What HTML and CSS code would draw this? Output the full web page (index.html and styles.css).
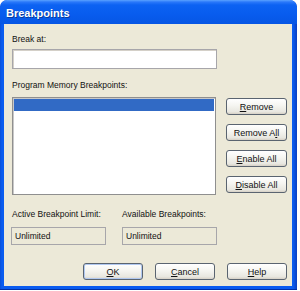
FILE: index.html
```html
<!DOCTYPE html>
<html>
<head>
<meta charset="utf-8">
<link rel="stylesheet" href="styles.css">
</head>
<body>
<div class="window">
  <div class="titlebar">Breakpoints</div>
  <div class="client">
    <div class="label">Break at:</div>
    <div class="input"></div>
    <div class="label label-prog">Program Memory Breakpoints:</div>
    <div class="list-row">
      <div class="listbox"><div class="selected"></div></div>
      <div class="side-buttons">
        <div class="btn"><u>R</u>emove</div>
        <div class="btn">Remove A<u>l</u>l</div>
        <div class="btn"><u>E</u>nable All</div>
        <div class="btn"><u>D</u>isable All</div>
      </div>
    </div>
    <div class="info-row">
      <div class="info">
        <div class="label">Active Breakpoint Limit:</div>
        <div class="ro">Unlimited</div>
      </div>
      <div class="info info2">
        <div class="label">Available Breakpoints:</div>
        <div class="ro">Unlimited</div>
      </div>
    </div>
    <div class="bottom-buttons">
      <div class="btn btn-default"><u>O</u>K</div>
      <div class="btn"><u>C</u>ancel</div>
      <div class="btn"><u>H</u>elp</div>
    </div>
  </div>
</div>
</body>
</html>
```
FILE: styles.css
```css
html, body {
  margin: 0;
  padding: 0;
  background: #ffffff;
}
body {
  width: 300px;
  height: 291px;
  overflow: hidden;
  font-family: "Liberation Sans", Arial, sans-serif;
}
.window {
  width: 297px;
  height: 290px;
  box-sizing: border-box;
  border-radius: 7px 7px 0 0;
  background: linear-gradient(to right, #0a4fd8 0, #0a5cf0 2px, #0a5cf0 293px, #0a3fc0 297px);
  display: flex;
  flex-direction: column;
  overflow: hidden;
  border-bottom: 1px solid #0030a8;
}
.titlebar {
  height: 24px;
  flex: none;
  box-sizing: border-box;
  padding: 6px 0 0 6px;
  color: #ffffff;
  font-weight: bold;
  font-size: 11px;
  line-height: 14px;
  background: linear-gradient(#5aa2ff 0, #2a78fa 2px, #0c62f2 5px, #085cee 60%, #0656e4 100%);
  border-radius: 7px 7px 0 0;
  text-shadow: 1px 1px 0 #0a3a9a;
}
.client {
  flex: 1;
  margin: 0 5px 3px 4px;
  background: #ece9d8;
  padding: 10px 0 0 8px;
  font-size: 8.5px;
  color: #111;
}
.label {
  line-height: 11px;
  height: 11px;
  white-space: nowrap;
}
.input {
  margin-top: 4px;
  width: 205px;
  height: 20px;
  box-sizing: border-box;
  background: #fff;
  border: 1px solid #a7a6aa;
  box-shadow: inset 1px 1px 0 #d4d0c8;
}
.label-prog {
  margin-top: 11px;
}
.list-row {
  display: flex;
  margin-top: 6px;
}
.listbox {
  width: 204px;
  height: 98px;
  box-sizing: border-box;
  background: #fff;
  border: 1px solid #8f8f8f;
  box-shadow: inset 1px 1px 0 #c8c8c8;
  padding: 1px;
}
.selected {
  height: 12px;
  background: #316ac5;
}
.side-buttons {
  margin-left: 10px;
  margin-top: 1px;
  display: flex;
  flex-direction: column;
  gap: 9px;
}
.btn {
  width: 61px;
  height: 17px;
  box-sizing: border-box;
  border: 1px solid #5a6470;
  border-radius: 3px;
  background: linear-gradient(#ffffff 0, #f6f6f2 40%, #e8e7e0 85%, #d6d0c5 100%);
  display: flex;
  align-items: center;
  justify-content: center;
  font-size: 9px;
  line-height: 10px;
  color: #111;
  white-space: nowrap;
}
.btn u {
  text-decoration: underline;
}
.info-row {
  display: flex;
  margin-top: 14px;
}
.info {
  width: 95px;
  margin-left: -1px;
}
.info .label {
  margin-left: 1px;
}
.info2 {
  margin-left: 16px;
}
.info2 .label {
  margin-left: 0;
}
.ro {
  margin-top: 7px;
  width: 95px;
  height: 18px;
  box-sizing: border-box;
  border: 1px solid #a7a6aa;
  background: #ece9d8;
  padding-left: 3px;
  line-height: 16px;
  font-size: 8.5px;
}
.bottom-buttons {
  display: flex;
  gap: 12px;
  margin-top: 18px;
  margin-left: 71px;
}
.bottom-buttons .btn {
  width: 60px;
}
.btn-default {
  box-shadow: inset 0 0 0 1px #b0c8f0;
}
```
